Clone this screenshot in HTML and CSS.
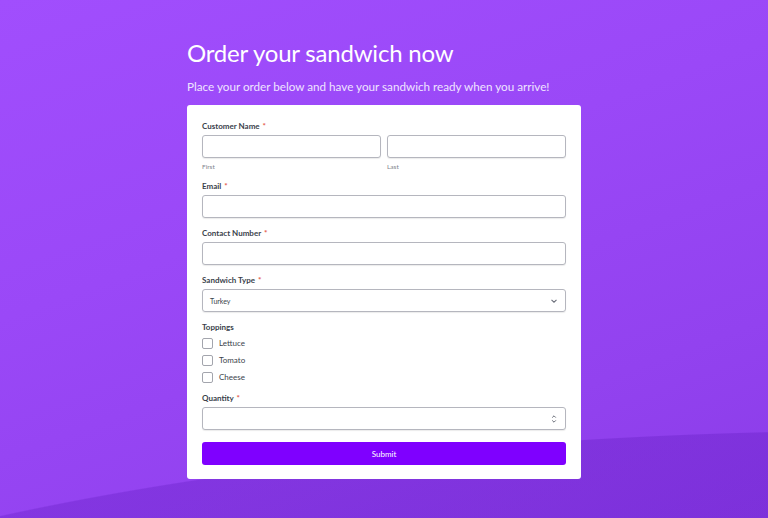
FILE: index.html
```html
<!DOCTYPE html>
<html>
<head>
    <title>Order your sandwich now</title>
    <link rel="stylesheet" href="styles.css">
</head>
<body>
    <div class="page">
        <h1>Order your sandwich now</h1>
        <p class="intro">Place your order below and have your sandwich ready when you arrive!</p>

        <form class="card">
            <div class="field">
                <label class="label">Customer Name <span class="req">*</span></label>
                <div class="name-row">
                    <div class="name-col">
                        <input type="text" class="input">
                        <span class="sub">First</span>
                    </div>
                    <div class="name-col">
                        <input type="text" class="input">
                        <span class="sub">Last</span>
                    </div>
                </div>
            </div>

            <div class="field">
                <label class="label">Email <span class="req">*</span></label>
                <input type="email" class="input">
            </div>

            <div class="field">
                <label class="label">Contact Number <span class="req">*</span></label>
                <input type="text" class="input">
            </div>

            <div class="field">
                <label class="label">Sandwich Type <span class="req">*</span></label>
                <div class="select">
                    <span>Turkey</span>
                    <svg width="8" height="6" viewBox="0 0 8 6"><path d="M1.5 1.8 L4 4.2 L6.5 1.8" fill="none" stroke="#6b6f7a" stroke-width="1.1"/></svg>
                </div>
            </div>

            <div class="field">
                <label class="label">Toppings</label>
                <div class="checks">
                    <label class="check"><span class="box"></span>Lettuce</label>
                    <label class="check"><span class="box"></span>Tomato</label>
                    <label class="check"><span class="box"></span>Cheese</label>
                </div>
            </div>

            <div class="field">
                <label class="label">Quantity <span class="req">*</span></label>
                <div class="input number">
                    <svg width="6" height="10" viewBox="0 0 6 10"><path d="M1.2 3.6 L3 1.8 L4.8 3.6 M1.2 6.4 L3 8.2 L4.8 6.4" fill="none" stroke="#6b6f7a" stroke-width="1"/></svg>
                </div>
            </div>

            <button type="button" class="submit">Submit</button>
        </form>
    </div>
</body>
</html>
```

FILE: styles.css
```css
body {
    margin: 0;
    height: 518px;
    overflow: hidden;
    font-family: Lato, "Noto Sans", sans-serif;
    background:
        radial-gradient(ellipse 1400px 365px at 900px 795px, rgba(95, 25, 190, 0.32) 99.7%, rgba(95, 25, 190, 0) 100%),
        linear-gradient(160deg, #a14efd 0%, #9a48f7 40%, #9242ef 75%, #8b3ce8 100%);
}

.page { width: 394px; margin: 0 auto; padding-top: 38px; }

h1 {
    margin: 0;
    font-size: 24px;
    font-weight: 400;
    letter-spacing: -0.2px;
    line-height: 30px;
    color: #fff;
}

.intro {
    margin: 10px 0 11px;
    font-size: 11.7px;
    line-height: 16px;
    white-space: nowrap;
    color: #efe4ff;
}

.card {
    display: block;
    background: #fff;
    border-radius: 3px;
    padding: 16px 15px 14px;
}

.field { margin-bottom: 10px; }

.label {
    display: block;
    font-size: 8px;
    font-weight: 700;
    line-height: 11px;
    color: #3a3f4b;
    margin-bottom: 3px;
}

.req { color: #e4574a; margin-left: 1px; }

.name-row { display: flex; gap: 6px; }
.name-col { flex: 1; }

.input {
    display: flex;
    align-items: center;
    justify-content: flex-end;
    box-sizing: border-box;
    width: 100%;
    height: 23px;
    margin: 0;
    padding: 0 8px;
    border: 1px solid #b5b6be;
    border-radius: 3px;
    background: #fff;
    box-shadow: 0 1px 1px rgba(0, 0, 0, 0.08);
}

.sub {
    display: block;
    margin-top: 4px;
    font-size: 6.5px;
    line-height: 9px;
    color: #80838c;
}

.select {
    display: flex;
    align-items: center;
    justify-content: space-between;
    height: 23px;
    box-sizing: border-box;
    padding: 0 7px;
    border: 1px solid #b5b6be;
    border-radius: 3px;
    box-shadow: 0 1px 1px rgba(0, 0, 0, 0.08);
    font-size: 7px;
    color: #3a3f4b;
}

.checks { display: flex; flex-direction: column; gap: 6px; margin-top: 5px; }

.check {
    display: flex;
    align-items: center;
    gap: 6px;
    font-size: 8px;
    line-height: 11px;
    color: #3a3f4b;
}

.box {
    width: 9px;
    height: 9px;
    border: 1px solid #a3a5ad;
    border-radius: 2px;
    background: #fff;
}

.submit {
    display: block;
    width: 100%;
    height: 23px;
    margin-top: 12px;
    border: 0;
    border-radius: 3px;
    background: #7f00ff;
    color: #fff;
    font-family: Lato, "Noto Sans", sans-serif;
    font-size: 8px;
}
```
